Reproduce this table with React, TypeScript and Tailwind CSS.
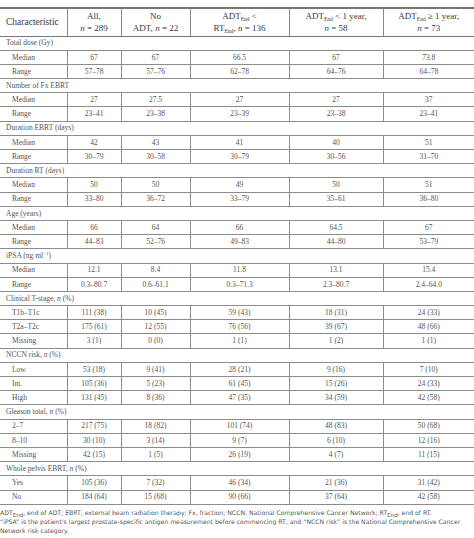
import React from 'react'

type Block = {
  title: React.ReactNode
  rows: [string, string[]][]
}

const N = () => <i>n</i>
const Sub = ({ children }: { children: React.ReactNode }) => (
  <span className="relative top-[2px] text-[5.5px] leading-none">{children}</span>
)

const blocks: Block[] = [
  {
    title: 'Total dose (Gy)',
    rows: [
      ['Median', ['67', '67', '66.5', '67', '73.8']],
      ['Range', ['57–78', '57–76', '62–78', '64–76', '64–78']],
    ],
  },
  {
    title: 'Number of Fx EBRT',
    rows: [
      ['Median', ['27', '27.5', '27', '27', '37']],
      ['Range', ['23–41', '23–38', '23–39', '23–38', '23–41']],
    ],
  },
  {
    title: 'Duration EBRT (days)',
    rows: [
      ['Median', ['42', '43', '41', '40', '51']],
      ['Range', ['30–79', '30–58', '30–79', '30–56', '31–70']],
    ],
  },
  {
    title: 'Duration RT (days)',
    rows: [
      ['Median', ['50', '50', '49', '50', '51']],
      ['Range', ['33–80', '36–72', '33–79', '35–61', '36–80']],
    ],
  },
  {
    title: 'Age (years)',
    rows: [
      ['Median', ['66', '64', '66', '64.5', '67']],
      ['Range', ['44–83', '52–76', '49–83', '44–80', '53–79']],
    ],
  },
  {
    title: (
      <>
        iPSA (ng ml<span className="relative -top-[3px] text-[5px] leading-none">−1</span>)
      </>
    ),
    rows: [
      ['Median', ['12.1', '8.4', '11.8', '13.1', '15.4']],
      ['Range', ['0.3–80.7', '0.6–61.1', '0.3–71.3', '2.3–80.7', '2.4–64.0']],
    ],
  },
  {
    title: (
      <>
        Clinical T-stage, <N /> (%)
      </>
    ),
    rows: [
      ['T1b–T1c', ['111 (38)', '10 (45)', '59 (43)', '18 (31)', '24 (33)']],
      ['T2a–T2c', ['175 (61)', '12 (55)', '76 (56)', '39 (67)', '48 (66)']],
      ['Missing', ['3 (1)', '0 (0)', '1 (1)', '1 (2)', '1 (1)']],
    ],
  },
  {
    title: (
      <>
        NCCN risk, <N /> (%)
      </>
    ),
    rows: [
      ['Low', ['53 (18)', '9 (41)', '28 (21)', '9 (16)', '7 (10)']],
      ['Int.', ['105 (36)', '5 (23)', '61 (45)', '15 (26)', '24 (33)']],
      ['High', ['131 (45)', '8 (36)', '47 (35)', '34 (59)', '42 (58)']],
    ],
  },
  {
    title: (
      <>
        Gleason total, <N /> (%)
      </>
    ),
    rows: [
      ['2–7', ['217 (75)', '18 (82)', '101 (74)', '48 (83)', '50 (68)']],
      ['8–10', ['30 (10)', '3 (14)', '9 (7)', '6 (10)', '12 (16)']],
      ['Missing', ['42 (15)', '1 (5)', '26 (19)', '4 (7)', '11 (15)']],
    ],
  },
  {
    title: (
      <>
        Whole pelvis EBRT, <N /> (%)
      </>
    ),
    rows: [
      ['Yes', ['105 (36)', '7 (32)', '46 (34)', '21 (36)', '31 (42)']],
      ['No', ['184 (64)', '15 (68)', '90 (66)', '37 (64)', '42 (58)']],
    ],
  },
]

const headers: React.ReactNode[] = [
  <>
    All,
    <br />
    <N /> = 289
  </>,
  <>
    No
    <br />
    ADT, <N /> = 22
  </>,
  <>
    ADT<Sub>End</Sub> &lt;
    <br />
    RT<Sub>End</Sub>, <N /> = 136
  </>,
  <>
    ADT<Sub>End</Sub> &lt; 1 year,
    <br />
    <N /> = 58
  </>,
  <>
    ADT<Sub>End</Sub> ≥ 1 year,
    <br />
    <N /> = 73
  </>,
]

export default function App() {
  return (
    <div
      className="w-[474px] h-[538px] overflow-hidden bg-white pt-[7px] text-[#555]"
      style={{ fontFamily: '"Liberation Serif", serif' }}
    >
      <table className="w-[474px] table-fixed border-collapse">
        <colgroup>
          <col className="w-[67px]" />
          <col className="w-[54px]" />
          <col className="w-[69px]" />
          <col className="w-[99px]" />
          <col className="w-[94px]" />
          <col className="w-[91px]" />
        </colgroup>
        <thead>
          {/* Column headers */}
          <tr className="h-[28px] border-t-2 border-b border-[#777]">
            <th className="p-0 text-left pl-[6px] font-normal text-[9.5px] leading-[12px] text-[#3a3a3a]">
              Characteristic
            </th>
            {headers.map((h, i) => (
              <th
                key={i}
                className="p-0 border-l border-[#888] font-normal text-[9px] leading-[12px] text-[#3a3a3a] text-center"
              >
                {h}
              </th>
            ))}
          </tr>
        </thead>
        <tbody>
          {blocks.map((b, bi) => (
            <React.Fragment key={bi}>
              <tr className="h-[14.2px]">
                <td colSpan={6} className="p-0 pl-[6px] text-[7.5px] leading-none">
                  {b.title}
                </td>
              </tr>
              {b.rows.map(([label, vals], ri) => (
                <tr key={ri} className="h-[14.2px] border-y border-[#8c8c8c]">
                  <td className="p-0 pl-[12px] text-[7.5px] leading-none">{label}</td>
                  {vals.map((v, vi) => (
                    <td
                      key={vi}
                      className="p-0 border-l border-[#8c8c8c] text-center text-[7.5px] leading-none"
                    >
                      {v}
                    </td>
                  ))}
                </tr>
              ))}
            </React.Fragment>
          ))}
        </tbody>
      </table>

      {/* Footnote */}
      <div
        className="mt-[3px] whitespace-nowrap text-[6.15px] leading-[9px] text-[#555]"
        style={{ fontFamily: '"DejaVu Sans", sans-serif' }}
      >
        <p>
          ADT<Sub>End</Sub>, end of ADT; EBRT, external beam radiation therapy; Fx, fraction; NCCN, National
          Comprehensive Cancer Network; RT<Sub>End</Sub>, end of RT.
        </p>
        <p>
          “iPSA” is the patient's largest prostate-specific antigen measurement before commencing RT, and “NCCN
          risk” is the National Comprehensive Cancer
        </p>
        <p>Network risk category.</p>
      </div>
    </div>
  )
}
